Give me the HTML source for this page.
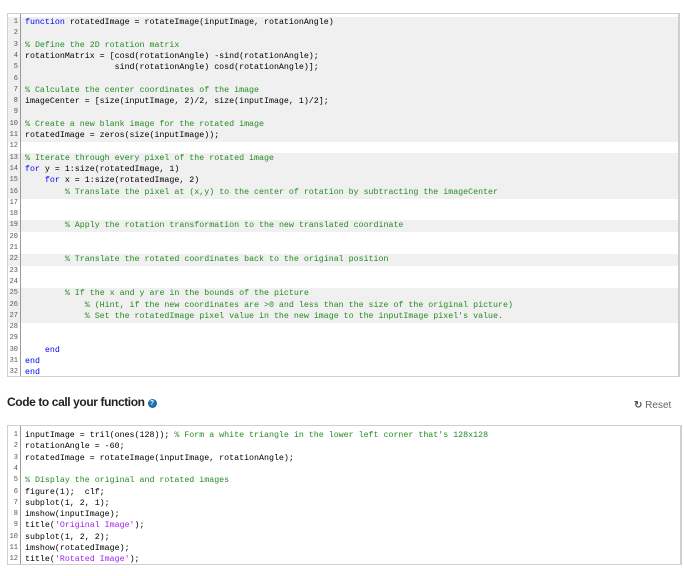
<!DOCTYPE html>
<html><head><meta charset="utf-8"><style>
body{margin:0;background:#fff;width:684px;height:576px;overflow:hidden;position:relative;font-family:"Liberation Sans",Arial,sans-serif}
.box{position:absolute;left:7px;border:1px solid #cfcfcf;border-right-width:2px;background:#fff;overflow:hidden}
.gut{position:absolute;left:0;top:0;bottom:0;width:12px;border-right:1px solid #999;z-index:2}
.l{position:absolute;left:0;right:0;height:11.6px;font:8.3px/11.3px "Liberation Mono",monospace;white-space:pre;color:#000}
.l.g{background:#f0f0f0}
.n{position:absolute;left:0;width:10px;text-align:right;color:#555;font-size:7px;z-index:3}
.t{position:absolute;left:17px}
.k{color:#0000ff}.c{color:#228b22}.s{color:#a020f0}
</style></head><body>
<div class="box" style="top:13px;width:670px;height:362px">
<div class="gut"></div>
<div id="a"></div>
</div>
<div style="position:absolute;left:7px;top:395px;font-size:12px;font-weight:bold;color:#222;letter-spacing:-0.4px">Code to call your function <span style="display:inline-block;width:9px;height:9px;border-radius:50%;background:#1a6fb0;color:#fff;font-size:7px;line-height:9px;text-align:center;vertical-align:1px;letter-spacing:0">?</span></div>
<div style="position:absolute;left:634px;top:400px;font-size:10px;color:#666"><span style="font-weight:bold;color:#555">&#8635;</span> Reset</div>
<div class="box" style="top:425px;width:672px;height:138px">
<div class="gut"></div>
<div id="b"></div>
</div>
<script>
function build(id,lines,top){var h='';lines.forEach(function(x,i){h+='<div class="l'+(x[0]?' g':'')+'" style="top:'+Math.round(top+i*11.3)+'px"><span class="n">'+(i+1)+'</span><span class="t">'+x[1]+'</span></div>';});document.getElementById(id).innerHTML=h;}
var C=function(s){return '<span class="c">'+s+'</span>'},K=function(s){return '<span class="k">'+s+'</span>'};
build('a',[
[1,K('function')+' rotatedImage = rotateImage(inputImage, rotationAngle)'],
[1,''],
[1,C('% Define the 2D rotation matrix')],
[1,'rotationMatrix = [cosd(rotationAngle) -sind(rotationAngle);'],
[1,'                  sind(rotationAngle) cosd(rotationAngle)];'],
[1,''],
[1,C('% Calculate the center coordinates of the image')],
[1,'imageCenter = [size(inputImage, 2)/2, size(inputImage, 1)/2];'],
[1,''],
[1,C('% Create a new blank image for the rotated image')],
[1,'rotatedImage = zeros(size(inputImage));'],
[0,''],
[1,C('% Iterate through every pixel of the rotated image')],
[1,K('for')+' y = 1:size(rotatedImage, 1)'],
[1,'    '+K('for')+' x = 1:size(rotatedImage, 2)'],
[1,'        '+C('% Translate the pixel at (x,y) to the center of rotation by subtracting the imageCenter')],
[0,''],[0,''],
[1,'        '+C('% Apply the rotation transformation to the new translated coordinate')],
[0,''],[0,''],
[1,'        '+C('% Translate the rotated coordinates back to the original position')],
[0,''],[0,''],
[1,'        '+C('% If the x and y are in the bounds of the picture')],
[1,'            '+C('% (Hint, if the new coordinates are >0 and less than the size of the original picture)')],
[1,'            '+C('% Set the rotatedImage pixel value in the new image to the inputImage pixel\'s value.')],
[0,''],[0,''],
[0,'    '+K('end')],
[0,K('end')],
[0,K('end')]
],3);
var S=function(s){return '<span class="s">'+s+'</span>'};
build('b',[
[0,'inputImage = tril(ones(128)); '+C('% Form a white triangle in the lower left corner that\'s 128x128')],
[0,'rotationAngle = -60;'],
[0,'rotatedImage = rotateImage(inputImage, rotationAngle);'],
[0,''],
[0,C('% Display the original and rotated images')],
[0,'figure(1);  clf;'],
[0,'subplot(1, 2, 1);'],
[0,'imshow(inputImage);'],
[0,'title('+S("'Original Image'")+');'],
[0,'subplot(1, 2, 2);'],
[0,'imshow(rotatedImage);'],
[0,'title('+S("'Rotated Image'")+');']
],4);
</script>
</body></html>
